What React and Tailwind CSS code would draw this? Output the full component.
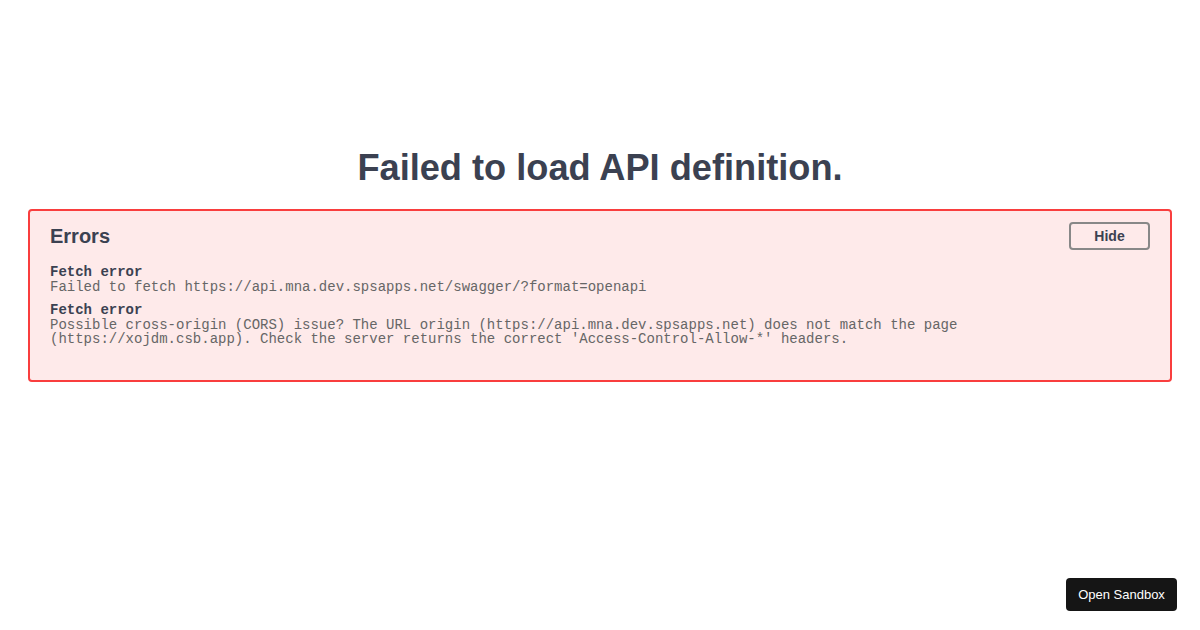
export default function App() {
  const sans = { fontFamily: '"Liberation Sans", Arial, sans-serif' };
  const mono = { fontFamily: '"Liberation Mono", "Courier New", monospace' };
  return (
    <div className="relative w-[1200px] h-[630px] bg-white overflow-hidden" style={sans}>
      <div className="pt-[148px]">
        <h4 className="text-center text-[36.2px] leading-[40px] font-bold text-[#3b4151]">
          Failed to load API definition.
        </h4>
        <div className="mx-[28px] mt-[21px] border-2 border-[#f93e3e] rounded-[4px] bg-[#feeaea] px-[20px] pt-[11px] pb-[33px]">
          <div className="flex items-center justify-between h-[28px]">
            <h4 className="text-[20px] leading-[28px] font-bold text-[#3b4151]">Errors</h4>
            <button className="w-[81px] h-[28px] border-2 border-[#888888] rounded-[4px] bg-transparent text-[14px] font-bold text-[#3b4151] flex items-center justify-center">
              Hide
            </button>
          </div>
          <div className="mt-[15px] text-[14px] leading-[14.5px]" style={mono}>
            <div className="mb-[9px]">
              <div className="font-bold text-[#3b4151]">Fetch error</div>
              <div className="text-[#666666]">
                Failed to fetch https://api.mna.dev.spsapps.net/swagger/?format=openapi
              </div>
            </div>
            <div>
              <div className="font-bold text-[#3b4151]">Fetch error</div>
              <div className="text-[#666666]">
                Possible cross-origin (CORS) issue? The URL origin (https://api.mna.dev.spsapps.net) does not match the page
              </div>
              <div className="text-[#666666]">
                (https://xojdm.csb.app). Check the server returns the correct 'Access-Control-Allow-*' headers.
              </div>
            </div>
          </div>
        </div>
      </div>
      <button className="absolute right-[23px] bottom-[19px] w-[111px] h-[33px] rounded-[4px] bg-[#151515] text-white text-[13px] flex items-center justify-center">
        Open Sandbox
      </button>
    </div>
  );
}
